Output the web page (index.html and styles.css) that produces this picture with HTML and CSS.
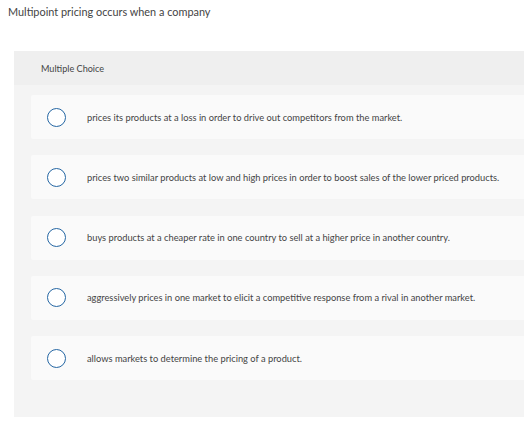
FILE: index.html
```html
<!DOCTYPE html>
<html>
<head>
<meta charset="utf-8">
<link rel="stylesheet" href="styles.css">
</head>
<body>
<div class="page">
  <p class="question">Multipoint pricing occurs when a company</p>
  <section class="panel">
    <div class="panel-head">Multiple Choice</div>
    <div class="options">
      <label class="option"><span class="radio"></span><span class="opt-text">prices its products at a loss in order to drive out competitors from the market.</span></label>
      <label class="option"><span class="radio"></span><span class="opt-text">prices two similar products at low and high prices in order to boost sales of the lower priced products.</span></label>
      <label class="option"><span class="radio"></span><span class="opt-text">buys products at a cheaper rate in one country to sell at a higher price in another country.</span></label>
      <label class="option"><span class="radio"></span><span class="opt-text">aggressively prices in one market to elicit a competitive response from a rival in another market.</span></label>
      <label class="option"><span class="radio"></span><span class="opt-text">allows markets to determine the pricing of a product.</span></label>
    </div>
  </section>
</div>
</body>
</html>
```
FILE: styles.css
```css
html, body {
  margin: 0;
  padding: 0;
  background: #ffffff;
  overflow: hidden;
}
.page {
  font-family: "Lato", "Open Sans", sans-serif;
  color: #333333;
  width: 540px;
}
.question {
  margin: 0;
  padding: 5px 0 0 8px;
  font-size: 10.9px;
  line-height: 14px;
  height: 51px;
  box-sizing: border-box;
  color: #444444;
}
.panel {
  margin-left: 14px;
  background: #f4f4f4;
  padding-bottom: 37px;
}
.panel-head {
  background: #efefef;
  height: 34px;
  display: flex;
  align-items: center;
  padding-left: 27px;
  font-size: 9.1px;
  color: #444444;
}
.options {
  display: flex;
  flex-direction: column;
  gap: 16.25px;
  padding: 10px 0 0 17px;
}
.option {
  display: flex;
  align-items: center;
  height: 44px;
  background: #fafafa;
  border-radius: 2px;
  padding-left: 16px;
}
.radio {
  flex: none;
  box-sizing: border-box;
  width: 19px;
  height: 19px;
  border: 1.5px solid #2466a3;
  border-radius: 50%;
  background: #ffffff;
}
.opt-text {
  margin-left: 21px;
  font-size: 9.3px;
  color: #444444;
}
```
